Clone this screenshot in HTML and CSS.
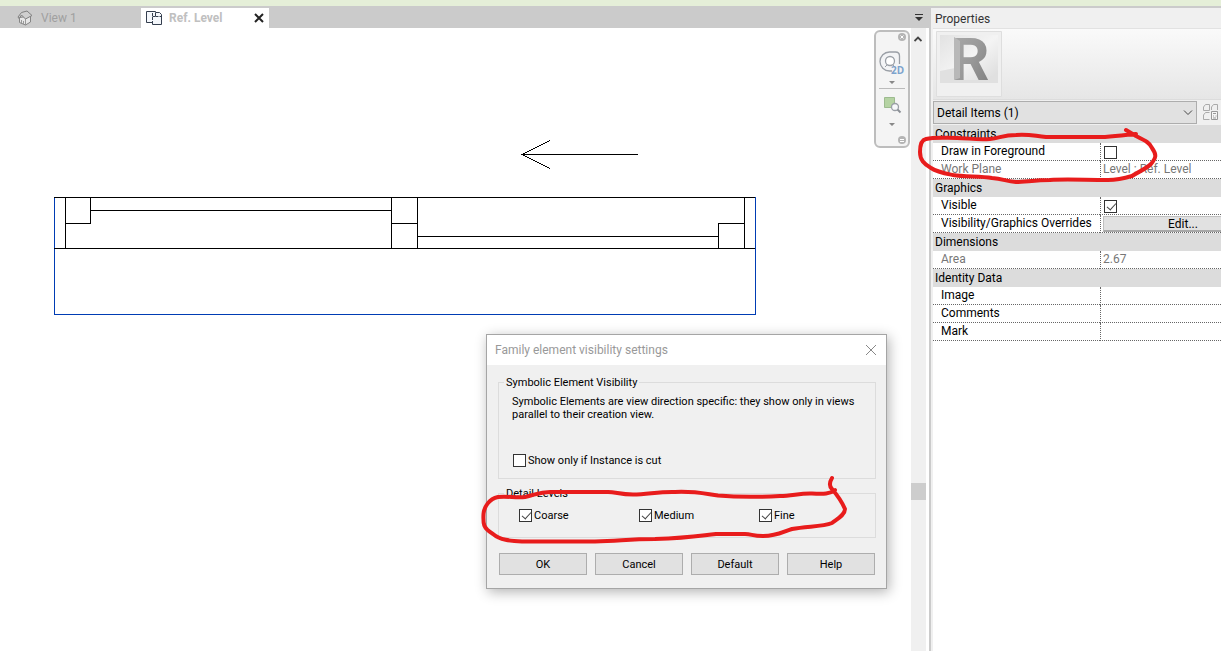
FILE: index.html
```html
<!DOCTYPE html>
<html lang="en">
<head>
  <meta charset="UTF-8" />
  <meta name="viewport" content="width=device-width, initial-scale=1.0" />
  <title>Ref. Level</title>
  <link rel="stylesheet" href="styles.css">
</head>
<body>
  <div class="ribbon-edge"></div>
  <div class="app">
    <main class="workspace">
      <!-- view tabs -->
      <nav class="tabs">
        <a class="tab" href="#">
          <svg class="tab-icon" width="16" height="16" viewBox="0 0 16 16">
            <path d="M2.500 7.500v5l6 2.500 5-3V6z" fill="#e6e6e6" stroke="#858585"/>
            <path d="M8.500 9v6" stroke="#999"/>
            <path d="M1 7l3.500-4.500L10 1l5 4.500-6.500 3.500-4-4L2 8.500z" fill="#cfcfcf" stroke="#808080"/>
            <path d="M4.500 10v3M6.500 11v3" stroke="#999"/>
          </svg>
          <span>View 1</span>
        </a>
        <div class="tab active">
          <svg class="tab-icon" width="17" height="16" viewBox="0 0 17 16">
            <path d="M.5 1.500h9v1h4l2 2v10h-9v-2h-6z" fill="#f4f7fb" stroke="#343e4e"/>
            <path d="M6.500 3v10M9.500 3v3M6.500 6.500h3M9.500 6.500h6" fill="none" stroke="#343e4e" stroke-dasharray="3 1"/>
          </svg>
          <span>Ref. Level</span>
          <button class="tab-close" aria-label="Close view">
            <svg width="10" height="10" viewBox="0 0 10 10"><path d="M1 1l8 8M9 1L1 9" stroke="#222" stroke-width="2"/></svg>
          </button>
        </div>
        <button class="tab-list" aria-label="View list">
          <svg width="8" height="8" viewBox="0 0 8 8"><path d="M0 0h8v1H0zM0 3h8L4 7z" fill="#333"/></svg>
        </button>
      </nav>

      <div class="view">
        <div class="canvas">
          <!-- sliding window plan -->
          <svg class="plan" width="702" height="176" viewBox="54 140 702 176" shape-rendering="crispEdges" fill="none">
            <path d="M54.500 197v117.500h701V197" stroke="#003cb4"/>
            <path d="M54 197.500h701M54 248.500h701M65.500 197v51M744.500 197v51M391.500 197v51M417.500 197v51" stroke="#000"/>
            <path d="M65 223.500h25.500V197M90 210.500h301M391 223.500h26M417 236.500h301M718.500 248v-24.500h26" stroke="#000"/>
            <path d="M522 154.500h116M550 140.500l-28 14 28 14" stroke="#000"/>
          </svg>

          <!-- navigation bar -->
          <div class="navbar">
            <svg width="34" height="116" viewBox="0 0 34 116">
              <circle cx="27" cy="6" r="4" fill="#b4b4b4"/>
              <path d="M25.500 4.500l3 3M28.500 4.500l-3 3" stroke="#fff"/>
              <path d="M24.500 33V25c0-3-1-4-4-4h-6a9 9 0 0 0 0 19H17" fill="#f3f4f6" stroke="#9a9fa6" stroke-width="1.300"/>
              <circle cx="15" cy="30" r="4.500" fill="#fff" stroke="#9a9fa6" stroke-width="1.300"/>
              <path d="M10 36l2-2M18 34l3 3" stroke="#9a9fa6"/>
              <text class="nav-2d" x="16" y="43">2D</text>
              <path d="M14 50h6l-3 3zM14 92h6l-3 3z" fill="#888"/>
              <path d="M4 57.500h26" stroke="#bbb"/>
              <path d="M9.500 66.500h10v10h-10z" fill="#b5d3a3" stroke="#9dbb8f"/>
              <circle cx="20" cy="76" r="3.500" fill="#f6f8fa" stroke="#9a9fa6" stroke-width="1.300"/>
              <path d="M22.500 78.500l3 3" stroke="#8c9096" stroke-width="2"/>
              <circle cx="27" cy="109" r="4" fill="#b4b4b4"/>
              <path d="M25 108.500h4M25 110.500h4" stroke="#fff"/>
            </svg>
          </div>

          <!-- visibility dialog -->
          <form class="dialog">
            <header class="dialog-title">
              <h2>Family element visibility settings</h2>
              <button type="button" class="dialog-close" aria-label="Close">
                <svg width="12" height="12" viewBox="0 0 12 12"><path d="M1 1l10 10M11 1L1 11" stroke="#888"/></svg>
              </button>
            </header>
            <div class="dialog-body">
              <fieldset class="group">
                <legend>Symbolic Element Visibility</legend>
                <p>Symbolic Elements are view direction specific: they show only in views parallel to their creation view.</p>
                <label class="check"><input type="checkbox"> Show only if Instance is cut</label>
              </fieldset>
              <fieldset class="group">
                <legend>Detail Levels</legend>
                <div class="levels">
                  <label class="check"><input type="checkbox" checked> Coarse</label>
                  <label class="check"><input type="checkbox" checked> Medium</label>
                  <label class="check"><input type="checkbox" checked> Fine</label>
                </div>
              </fieldset>
              <div class="actions">
                <button type="button">OK</button>
                <button type="button">Cancel</button>
                <button type="button">Default</button>
                <button type="button">Help</button>
              </div>
            </div>
            <svg class="mark mark-levels" width="370" height="74" viewBox="480 474 370 74">
              <path d="M832 478C829 483 829 486 832 489C838 496 842 502 845 509C845 515 837 519 832 523C822 527 807 526 792 529C782 532 778 536 763 536C752 536 752 534 745 534H716C698 536 690 538 655 539C628 539 620 541 595 541.500H522C510 541 500 540 493 534C483 528 483 524 483.500 514C484 507 489 499 498 497C508 496 516 498 525 497C535 495 539 492 550 492H608C616 492 620 494.500 633 494.500C648 494.500 658 491.500 675 492C695 491 706 494 718 495.500C735 497 762 497 780 496C792 496 800 493 812 493.500C824 494 830 494 835 490"/>
            </svg>
          </form>
        </div>
        <div class="scrollbar">
          <svg width="8" height="6" viewBox="0 0 8 6"><path d="M.5 5L4 1.500 7.500 5" fill="none" stroke="#444" stroke-width="1.800"/></svg>
          <div class="thumb"></div>
        </div>
      </div>
    </main>

    <aside class="properties">
      <h1>Properties</h1>
      <div class="preview">
        <svg width="66" height="66" viewBox="0 0 66 66">
          <defs>
            <linearGradient id="floor" x1="0" y1="0" x2="1" y2="1">
              <stop offset="0" stop-color="#e2e2e2"/><stop offset=".5" stop-color="#f4f4f4"/><stop offset="1" stop-color="#dadada"/>
            </linearGradient>
            <linearGradient id="face" x1="0" y1="0" x2="1" y2="1">
              <stop offset="0" stop-color="#adadad"/><stop offset=".5" stop-color="#9a9a9a"/><stop offset="1" stop-color="#7c7c7c"/>
            </linearGradient>
          </defs>
          <path d="M.5.500h65v65H.5z" fill="#f0f0f0" stroke="#dedede"/>
          <path d="M4 4h58v48H4z" fill="url(#floor)"/>
          <path d="M4 40l15-3v12L4 52zM50 49l12-7v10H4l14-3z" fill="#e0e0e0"/>
          <text class="logo" x="15" y="49" fill="url(#face)">R</text>
          <path d="M18 6v43l6-2V10z" fill="#b8b8b8"/>
        </svg>
      </div>
      <div class="type-row">
        <div class="type-select">
          <select aria-label="Type filter"><option>Detail Items (1)</option></select>
          <svg width="10" height="6" viewBox="0 0 10 6"><path d="M1 .5l4 4 4-4" fill="none" stroke="#444"/></svg>
        </div>
        <button class="edit-type" aria-label="Edit type">
          <svg width="17" height="17" viewBox="0 0 17 17" fill="none" stroke="#aaa">
            <path d="M1.500 3l2-2.500h4v6h-6zM9.500 6V3l2-2.500h4V6M1.500 11l2-2.500h4M1.500 11v4.500h6"/>
            <path d="M9.500 7.500h6v8h-6z" fill="#f6f6f6" stroke="#999"/>
            <path d="M11 9.500h3M11 12h1M13.500 12h1M11 14h3" stroke="#999"/>
          </svg>
        </button>
      </div>
      <table class="params">
        <colgroup><col class="col-name"><col></colgroup>
        <tbody>
          <tr class="section"><th colspan="2">Constraints</th></tr>
          <tr><th><label for="fg">Draw in Foreground</label></th><td><input type="checkbox" id="fg"></td></tr>
          <tr class="muted"><th>Work Plane</th><td>Level : Ref. Level</td></tr>
          <tr class="section"><th colspan="2">Graphics</th></tr>
          <tr><th><label for="visible">Visible</label></th><td><input type="checkbox" id="visible" checked></td></tr>
          <tr><th>Visibility/Graphics Overrides</th><td><button class="edit">Edit...</button></td></tr>
          <tr class="section"><th colspan="2">Dimensions</th></tr>
          <tr class="muted"><th>Area</th><td>2.67</td></tr>
          <tr class="section"><th colspan="2">Identity Data</th></tr>
          <tr><th>Image</th><td></td></tr>
          <tr><th>Comments</th><td></td></tr>
          <tr><th>Mark</th><td></td></tr>
        </tbody>
      </table>
      <svg class="mark mark-foreground" width="246" height="62" viewBox="915 125 246 62">
        <path d="M1126 130L1136 136C1146 141 1150 143 1152 148C1157 155 1156 158 1151 164C1146 169 1138 172 1132 176C1122 179 1118 180 1108 180C1085 180 1065 179 1050 180C1035 180 1025 182 1016 182C1006 181 1003 179 992 178C980 176 965 177 953 175C943 173 937 172 931 168C924 164 920 160 920 152C920 146 921 140 926 139C935 137 945 138 957 138C968 138 976 140 990 139C1000 138 1003 135 1016 135C1030 134 1034 136 1046 137H1105C1118 136 1126 135 1136 134"/>
      </svg>
    </aside>
  </div>
</body>
</html>
```
FILE: styles.css
```css
* { margin: 0; padding: 0; box-sizing: border-box; }
body {
  height: 100vh;
  display: flex; flex-direction: column;
  overflow: hidden;
  background: #fff;
  color: #000;
  font: 12px/18px Roboto, "Open Sans", sans-serif;
}
svg { display: block; flex: none; }
button { font: inherit; color: inherit; background: none; border: none; }

.ribbon-edge { height: 6px; background: #e5efd8; }
.app {
  flex: 1;
  display: flex;
  min-height: 0;
  padding-top: 2px;
  background: #cbcbcb;
}
.workspace { flex: 1; display: flex; flex-direction: column; min-width: 0; }

/* tabs */
.tabs { display: flex; height: 20px; }
.tab {
  display: flex; align-items: center; gap: 8px;
  width: 141px;
  padding-left: 17px;
  color: #a0a0a0;
  text-decoration: none;
}
.tab.active {
  width: 128px;
  padding: 0 5px;
  gap: 6px;
  background: #fff;
  color: #c0c0c0;
  font-weight: bold;
}
.tab-close { margin-left: auto; }
.tab-list { margin-left: auto; padding-right: 6px; }

/* view */
.view { flex: 1; display: flex; min-height: 0; padding-right: 3px; background: #fff; }
.canvas { flex: 1; position: relative; }
.plan { position: absolute; left: 54px; top: 112px; }
.scrollbar {
  position: relative;
  width: 15px;
  padding: 8px 3px;
  background: #f0f0f0;
}
.thumb {
  position: absolute;
  left: 0; top: 455px;
  width: 15px; height: 17px;
  background: #cdcdcd;
}
.navbar {
  position: absolute;
  right: 1px; top: 2px;
  border: 2px solid #bdbdbd;
  border-radius: 6px;
  background: #f4f4f4;
}
.navbar svg { margin: -1px; }
.nav-2d { font: bold 10px "Open Sans", sans-serif; fill: #7da3cd; }

/* dialog */
.dialog {
  position: absolute;
  left: 486px; top: 306px;
  width: 401px;
  border: 1px solid #a5a5a5;
  background: #f0f0f0;
  box-shadow: 2px 3px 12px rgba(0,0,0,0.3);
  font-size: 11px;
  line-height: 13px;
}
.dialog-title {
  display: flex; align-items: center; justify-content: space-between;
  height: 30px;
  padding: 0 9px 0 8px;
  background: #fff;
}
.dialog-title h2 { font-size: 12px; font-weight: normal; line-height: 18px; color: #999; }
.dialog-body {
  display: flex; flex-direction: column; gap: 8px;
  padding: 11px 10px 13px 11px;
}
.group { min-width: 0; border: 1px solid #dcdcdc; }
.group legend { margin-left: 5px; padding: 0 2px; }
.group p { padding: 6px 13px 0; }
.group > .check { margin: 33px 0 11px 14px; }
.check { display: flex; align-items: center; gap: 2px; }
.levels { display: flex; padding: 9px 0 15px 20px; }
.levels .check { width: 120px; }
.levels .check:last-child { width: auto; }
.actions { display: flex; gap: 8px; padding: 7px 1px 0; }
.actions button {
  flex: 1;
  height: 22px;
  border: 1px solid #adadad;
  background: #e1e1e1;
}

input[type="checkbox"] {
  appearance: none;
  position: relative;
  flex: none;
  width: 13px; height: 13px;
  border: 1px solid #333;
  background: #fff;
}
input[type="checkbox"]:checked::after {
  content: '';
  position: absolute;
  left: 4px; top: 0;
  width: 4px; height: 8px;
  border: solid #444;
  border-width: 0 1px 1px 0;
  transform: rotate(42deg);
}

/* properties */
.properties {
  position: relative;
  width: 290px;
  margin-left: 2px;
  padding-left: 2px;
  background: #f0f0f0;
}
.properties h1 { height: 20px; padding: 2px; font-size: 12px; font-weight: normal; color: #333; }
.preview {
  height: 72px;
  padding: 2px 3px;
  border-top: 1px solid #e2e2e2;
  border-bottom: 1px solid #dcdcdc;
  background: linear-gradient(#fafafa, #e6e6e6);
}
.type-row { display: flex; align-items: center; gap: 5px; height: 25px; }
.type-select { position: relative; width: 264px; }
.type-select select {
  appearance: none;
  display: block;
  width: 100%; height: 23px;
  padding: 0 3px;
  border: 1px solid #adadad;
  border-radius: 0;
  background: #e1e1e1;
  color: #000;
  font: inherit;
}
.type-select svg { position: absolute; right: 4px; top: 9px; }
.params {
  width: 100%;
  table-layout: fixed;
  border-spacing: 0;
  background: #fff;
  box-shadow: 0 400px 0 400px #fff;
  clip-path: inset(0 0 -400px 0);
}
.params .col-name { width: 167px; }
.params tr { height: 18px; }
.params th, .params td {
  height: 18px;
  border-bottom: 1px dotted #666;
  font-weight: normal;
  line-height: 16px;
  text-align: left;
  vertical-align: top;
  white-space: nowrap;
  overflow: hidden;
}
.params th { padding-left: 8px; }
.params td { padding-left: 2px; border-left: 1px dotted #666; }
.params .section th { padding-left: 2px; border: 0; background: #dcdcdc; line-height: 18px; }
.params .muted { color: #777; }
.params input { display: block; margin: 3px 0 0 1px; }
.edit {
  display: block;
  width: 160px; height: 16px;
  margin-top: 1px;
  border: 1px solid #c0c0c0;
  border-bottom: 2px solid #a8a8a8;
  background: #e1e1e1;
  line-height: 14px;
}

/* red pen marks */
.mark {
  position: absolute;
  pointer-events: none;
  fill: none;
  stroke: #e81c1c;
  stroke-width: 4;
  stroke-linecap: round;
  stroke-linejoin: round;
}
.mark-levels { left: -7px; top: 139px; }
.mark-foreground { left: -16px; top: 117px; }

.logo { font: bold 60px Roboto, sans-serif; }
```
